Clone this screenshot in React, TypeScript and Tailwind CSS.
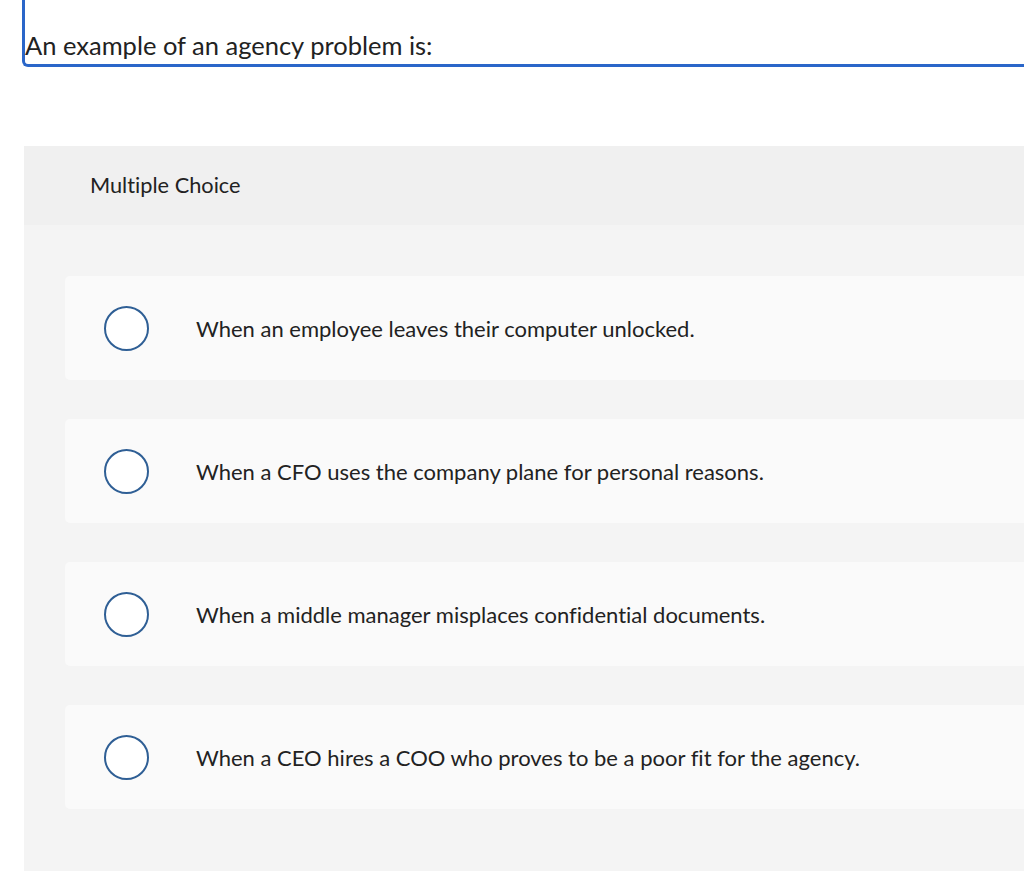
const options = [
  "When an employee leaves their computer unlocked.",
  "When a CFO uses the company plane for personal reasons.",
  "When a middle manager misplaces confidential documents.",
  "When a CEO hires a COO who proves to be a poor fit for the agency.",
];

export default function App() {
  return (
    <div className="min-h-[871px] w-[1024px] overflow-hidden bg-white text-[#222] font-['Lato','Liberation_Sans',sans-serif] [font-variant-ligatures:none]">
      <div className="ml-[22px] -mt-[4px] h-[71px] w-[1010px] rounded-bl-[6px] border-b-[3px] border-l-[3px] border-[#2a66c9] flex items-end pb-[4px]">
        <p className="text-[25.5px] leading-[30px] text-[#222]">An example of an agency problem is:</p>
      </div>

      <div className="ml-[24px] mt-[79px] w-[1010px] rounded-tl-[4px] bg-[#f4f4f4]">
        <div className="h-[79px] bg-[#f0f0f0] pl-[66px] flex items-center">
          <span className="text-[21.75px] text-[#222]">Multiple Choice</span>
        </div>
        <div className="pl-[41px] pt-[51px] pb-[80px] flex flex-col gap-[39px]">
          {options.map((o) => (
            <div key={o} className="h-[104px] rounded-[5px] bg-[#fafafa] flex items-center">
              <span className="ml-[39px] h-[45px] w-[45px] rounded-full border-2 border-[#2f5f95] bg-white shrink-0" />
              <span className="ml-[47px] text-[22px] text-[#222]">{o}</span>
            </div>
          ))}
        </div>
      </div>
    </div>
  );
}
